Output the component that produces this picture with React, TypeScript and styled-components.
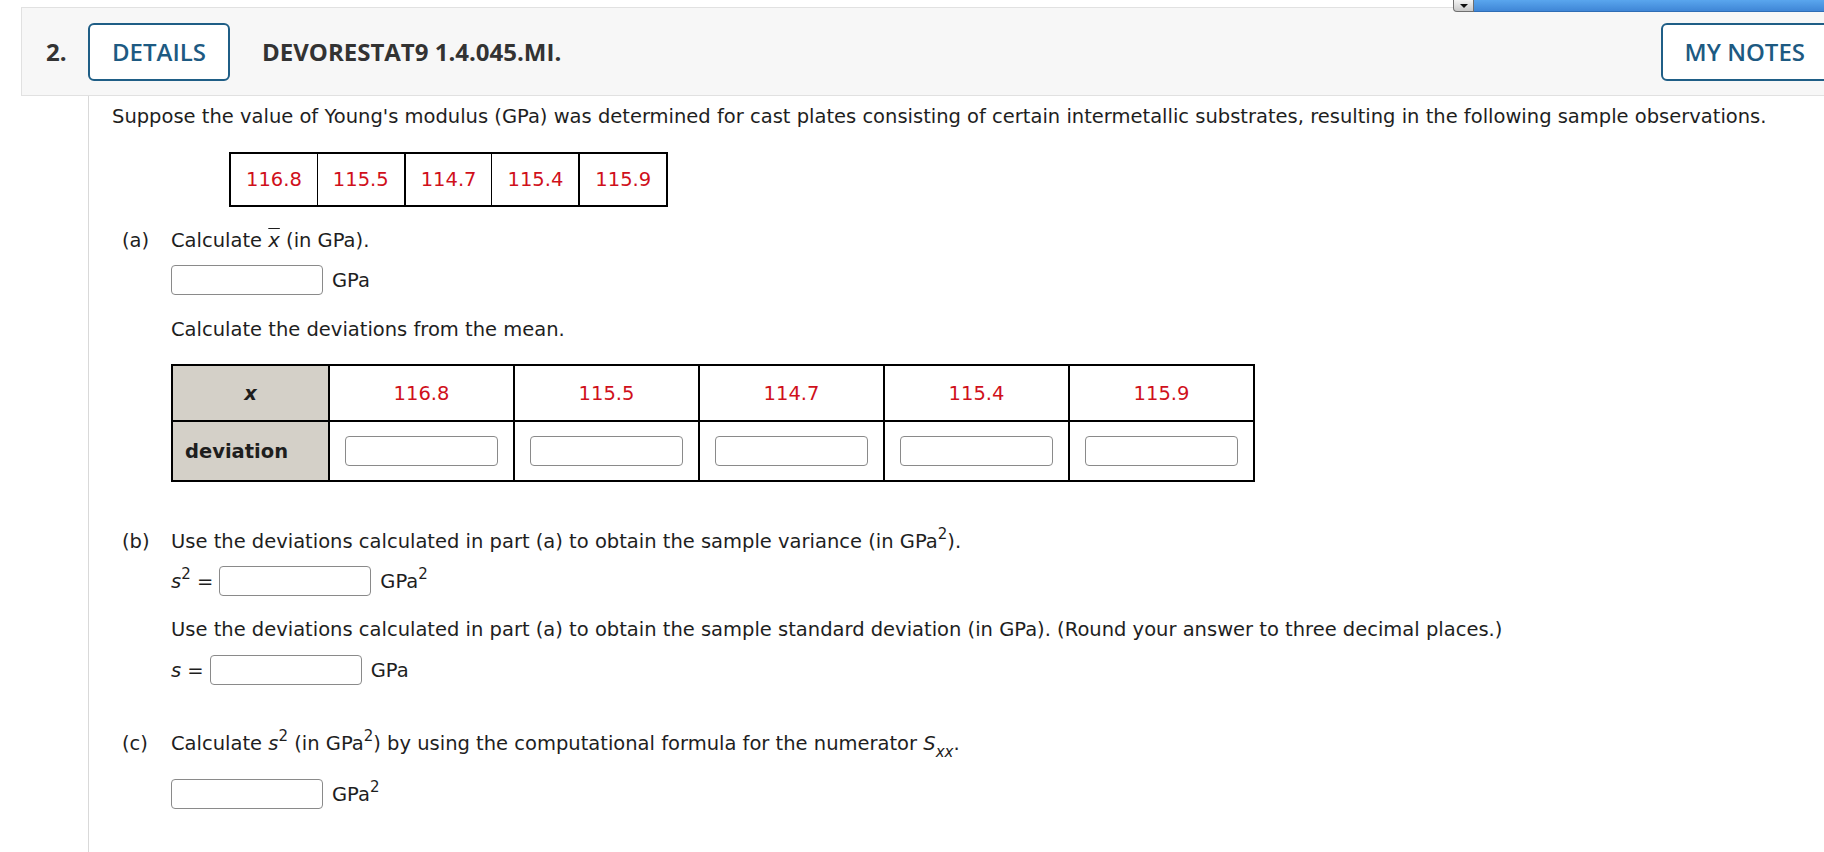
import React from 'react'
import styled, { createGlobalStyle } from 'styled-components'

const GlobalStyle = createGlobalStyle`
  html, body {
    margin: 0;
    padding: 0;
    background: #fff;
    overflow: hidden;
  }
  body {
    font-family: "DejaVu Sans", Verdana, sans-serif;
    font-size: 19.5px;
    color: #1e1e1e;
  }
`

const Page = styled.div`
  position: relative;
  width: 1850px;
  height: 852px;
  padding: 7px 0 0 21px;
  box-sizing: border-box;
`

const TopBar = styled.div`
  position: fixed;
  top: 0;
  left: 1453px;
  right: 0;
  height: 12px;
  display: flex;
  z-index: 5;
`

const DropButton = styled.div`
  width: 21px;
  height: 12px;
  box-sizing: border-box;
  border: 1px solid #6f6f6f;
  border-top: none;
  border-radius: 0 0 0 4px;
  background: linear-gradient(#f4f4f4, #c9c9c9);
  display: flex;
  align-items: center;
  justify-content: center;

  &::after {
    content: '';
    border-left: 4px solid transparent;
    border-right: 4px solid transparent;
    border-top: 4px solid #111;
  }
`

const BlueStrip = styled.div`
  flex: 1;
  background: linear-gradient(#5aa6ee, #3f86d6);
  border-bottom: 1px solid #2f6db5;
`

const Header = styled.header`
  height: 89px;
  box-sizing: border-box;
  border: 1px solid #e1e1e1;
  background: #f7f7f7;
  display: flex;
  align-items: center;
  padding: 0 20px 0 24px;
  font-family: "Open Sans", "Liberation Sans", sans-serif;
`

const Number = styled.span`
  font-weight: 700;
  font-size: 24px;
  color: #333;
  width: 42px;
`

const OutlineButton = styled.div<{ $push?: boolean }>`
  height: 58px;
  box-sizing: border-box;
  padding: 0 22px;
  border: 2px solid #1f5e86;
  border-radius: 6px;
  background: #fff;
  color: #1d5a82;
  font-size: 24px;
  font-weight: 600;
  display: flex;
  align-items: center;
  margin-left: ${({ $push }) => ($push ? 'auto' : '0')};
`

const Title = styled.span`
  font-weight: 700;
  font-size: 24px;
  color: #333;
  margin-left: 32px;
`

const Body = styled.main`
  margin-left: 67px;
  border-left: 1px solid #d9d9d9;
  padding: 9px 0 0 23px;
  height: 760px;
  box-sizing: border-box;
`

const Line = styled.p<{ $top?: number }>`
  margin: ${({ $top }) => $top ?? 0}px 0 0;
  line-height: 24px;
`

const ObsTable = styled.table`
  border-collapse: collapse;
  margin: 23px 0 0 117px;
  border: 2px solid #000;
`

const ObsCell = styled.td<{ $thick?: boolean }>`
  height: 51px;
  padding: 0 15px;
  color: #d0101b;
  text-align: center;
  border-right: ${({ $thick }) => ($thick ? '2px' : '1px')} solid #000;
`

const Part = styled.section<{ $top: number }>`
  display: flex;
  margin-top: ${({ $top }) => $top}px;
  padding-left: 10px;
`

const PartLabel = styled.span`
  width: 49px;
  flex: none;
  line-height: 24px;
`

const PartBody = styled.div`
  flex: 1;
`

const AnswerRow = styled.div<{ $top: number }>`
  display: flex;
  align-items: center;
  margin-top: ${({ $top }) => $top}px;
  height: 30px;
`

const Answer = styled.input`
  width: 152px;
  height: 30px;
  box-sizing: border-box;
  border: 1px solid #8a8a8a;
  border-radius: 4px;
  background: #fff;
  margin: 0 9px 0 0;
  padding: 0 4px;
  font: inherit;
  outline: none;
`

const Prefix = styled.span`
  margin-right: 6px;
`

const Unit = styled.span``

const Var = styled.i`
  font-style: italic;
`

const Bar = styled.i`
  font-style: italic;
  text-decoration: overline;
`

const Sup = styled.sup`
  font-size: 15px;
  line-height: 0;
  vertical-align: 9px;
`

const Sub = styled.sub`
  font-size: 15px;
  font-style: italic;
  line-height: 0;
  vertical-align: -7px;
`

const DevTable = styled.table`
  border-collapse: collapse;
  table-layout: fixed;
  margin-top: 22px;
  border-top: 2px solid #000;
  border-left: 2px solid #000;
  border-right: 1px solid #000;
  border-bottom: 1px solid #000;
`

const HeadCell = styled.th<{ $h: number; $left?: boolean }>`
  box-sizing: border-box;
  width: 157px;
  height: ${({ $h }) => $h}px;
  background: #d4d0c8;
  font-weight: 700;
  text-align: ${({ $left }) => ($left ? 'left' : 'center')};
  padding: 0 0 0 ${({ $left }) => ($left ? '12px' : '0')};
  border-right: 2px solid #000;
  border-bottom: 2px solid #000;
`

const DevCell = styled.td<{ $h: number }>`
  box-sizing: border-box;
  width: 185px;
  height: ${({ $h }) => $h}px;
  text-align: center;
  color: #d0101b;
  border-right: 2px solid #000;
  border-bottom: 2px solid #000;
  padding: 0;
`

const DevInput = styled.input`
  width: 153px;
  height: 30px;
  box-sizing: border-box;
  border: 1px solid #8a8a8a;
  border-radius: 4px;
  background: #fff;
  font: inherit;
  outline: none;
  display: block;
  margin: 0 auto;
`

const observations = ['116.8', '115.5', '114.7', '115.4', '115.9']

export default function App() {
  return (
    <Page>
      <GlobalStyle />
      <TopBar>
        <DropButton />
        <BlueStrip />
      </TopBar>

      <Header>
        <Number>2.</Number>
        <OutlineButton>DETAILS</OutlineButton>
        <Title>DEVORESTAT9 1.4.045.MI.</Title>
        <OutlineButton $push>MY NOTES</OutlineButton>
      </Header>

      <Body>
        <Line>
          Suppose the value of Young's modulus (GPa) was determined for cast plates consisting of
          certain intermetallic substrates, resulting in the following sample observations.
        </Line>

        <ObsTable>
          <tbody>
            <tr>
              {observations.map((v, i) => (
                <ObsCell key={i} $thick={i % 2 === 1}>
                  {v}
                </ObsCell>
              ))}
            </tr>
          </tbody>
        </ObsTable>

        <Part $top={22}>
          <PartLabel>(a)</PartLabel>
          <PartBody>
            <Line>
              Calculate <Bar>x</Bar> (in GPa).
            </Line>
            <AnswerRow $top={12}>
              <Answer />
              <Unit>GPa</Unit>
            </AnswerRow>
            <Line $top={23}>Calculate the deviations from the mean.</Line>
            <DevTable>
              <tbody>
                <tr>
                  <HeadCell $h={56}>
                    <Var>x</Var>
                  </HeadCell>
                  {observations.map((v, i) => (
                    <DevCell key={i} $h={56}>
                      {v}
                    </DevCell>
                  ))}
                </tr>
                <tr>
                  <HeadCell $h={60} $left>
                    deviation
                  </HeadCell>
                  {observations.map((v, i) => (
                    <DevCell key={i} $h={60}>
                      <DevInput />
                    </DevCell>
                  ))}
                </tr>
              </tbody>
            </DevTable>
          </PartBody>
        </Part>

        <Part $top={48}>
          <PartLabel>(b)</PartLabel>
          <PartBody>
            <Line>
              Use the deviations calculated in part (a) to obtain the sample variance (in GPa
              <Sup>2</Sup>).
            </Line>
            <AnswerRow $top={12}>
              <Prefix>
                <Var>s</Var>
                <Sup>2</Sup> =
              </Prefix>
              <Answer />
              <Unit>
                GPa<Sup>2</Sup>
              </Unit>
            </AnswerRow>
            <Line $top={22}>
              Use the deviations calculated in part (a) to obtain the sample standard deviation (in
              GPa). (Round your answer to three decimal places.)
            </Line>
            <AnswerRow $top={13}>
              <Prefix>
                <Var>s</Var> =
              </Prefix>
              <Answer />
              <Unit>GPa</Unit>
            </AnswerRow>
          </PartBody>
        </Part>

        <Part $top={47}>
          <PartLabel>(c)</PartLabel>
          <PartBody>
            <Line>
              Calculate <Var>s</Var>
              <Sup>2</Sup> (in GPa<Sup>2</Sup>) by using the computational formula for the numerator{' '}
              <Var>S</Var>
              <Sub>xx</Sub>.
            </Line>
            <AnswerRow $top={23}>
              <Answer />
              <Unit>
                GPa<Sup>2</Sup>
              </Unit>
            </AnswerRow>
          </PartBody>
        </Part>
      </Body>
    </Page>
  )
}
